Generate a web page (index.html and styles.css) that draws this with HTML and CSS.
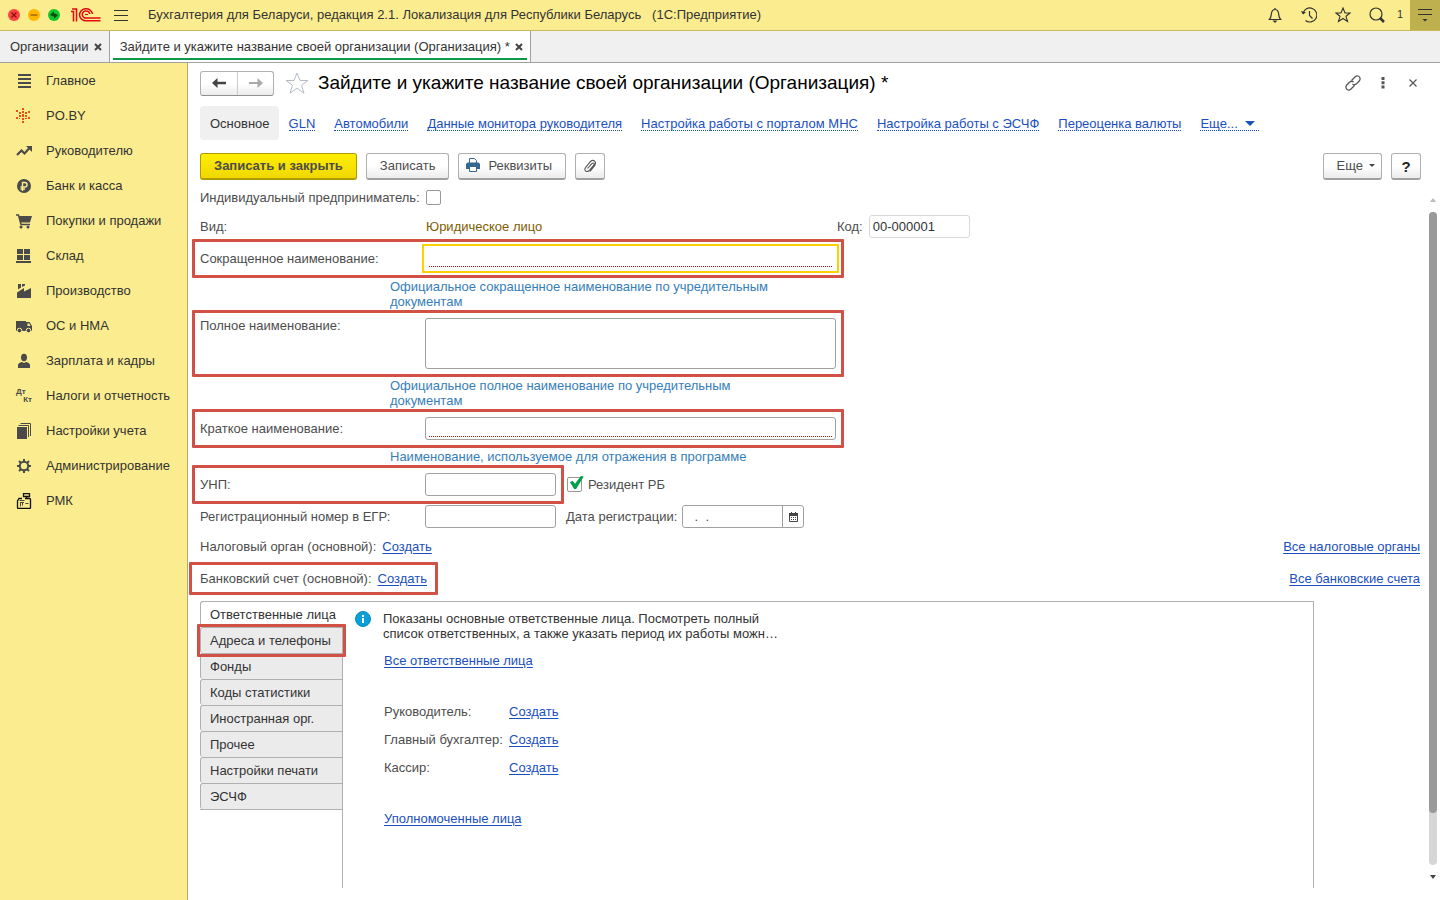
FILE: index.html
```
<!DOCTYPE html>
<html lang="ru">
<head>
    <meta charset="UTF-8">
    <meta name="viewport" content="width=device-width, initial-scale=1.0">
    <title>Бухгалтерия для Беларуси</title>
    <link rel="stylesheet" href="styles.css">
</head>
<body>
    <header class="topbar">
        <button class="win close" aria-label="Закрыть"><svg width="12" height="12" viewBox="0 0 12 12"><path d="M3.5 3.5l5 5M8.5 3.5l-5 5" stroke="#8c1010" stroke-width="1.3"/></svg></button>
        <button class="win minimize" aria-label="Свернуть"><svg width="12" height="12" viewBox="0 0 12 12"><path d="M2.5 6h7" stroke="#a06a00" stroke-width="1.5"/></svg></button>
        <button class="win maximize" aria-label="Развернуть"><svg width="12" height="12" viewBox="0 0 12 12"><path d="M6 2v5.500H5L2 6zM6 10V4.500h1L10 6z" fill="#06500c"/></svg></button>
        <svg class="logo" width="30" height="16" viewBox="0 0 30 16" fill="none" stroke="#e30613" stroke-width="1.5">
            <path d="M0 4.500H2.500V14.500M1 2H5.500V14.500"/>
            <path d="M21.500 7A6.500 6 0 1 0 15.500 13.800H29.500"/>
            <path d="M18.800 7A3.800 3.500 0 1 0 15.500 11H29.500"/>
            <path d="M14 7.500h3" stroke-width="1.200"/>
        </svg>
        <button class="icon-btn menu" aria-label="Меню"><svg width="14" height="11" viewBox="0 0 14 11"><path d="M0 .5h14M0 5.500h14M0 10.500h14" stroke="#333"/></svg></button>
        <span class="app-title">Бухгалтерия для Беларуси, редакция 2.1. Локализация для Республики Беларусь &nbsp; (1С:Предприятие)</span>
        <div class="top-tools">
            <button class="icon-btn" aria-label="Уведомления"><svg width="16" height="16" viewBox="0 0 16 16" fill="none" stroke="#333" stroke-width="1.2"><path d="M1.500 12.500h13M2.500 12c2-2 1.500-3.500 2-6C5 3.500 6.500 2.500 8 2.500s3 1 3.500 3.500c.5 2.500 0 4 2 6M8 1v1.500"/><path d="M5.500 13.500h5L8 16z" fill="#333" stroke="none"/></svg></button>
            <button class="icon-btn" aria-label="История"><svg width="16" height="16" viewBox="0 0 16 16" fill="none" stroke="#333" stroke-width="1.200"><path d="M2 6.500A7 7 0 1 1 4.500 13.500M8.500 4v4.500l3 3"/><path d="M0 4l2 3.500L5 5.200z" fill="#333" stroke="none"/></svg></button>
            <button class="icon-btn" aria-label="Избранное"><svg width="16" height="16" viewBox="0 0 16 16" fill="none" stroke="#333" stroke-width="1.100"><path d="M8 1l2 5h5l-4 3.300 1.500 5.200L8 11.500l-4.500 3L5 9.300 1 6h5z"/></svg></button>
            <button class="icon-btn" aria-label="Поиск"><svg width="16" height="16" viewBox="0 0 16 16" fill="none" stroke="#333"><circle cx="7" cy="7" r="6" stroke-width="1.200"/><path d="M11 11l4 4" stroke-width="2.500"/></svg></button>
            <span class="counter">1</span>
            <button class="icon-btn panel-toggle" aria-label="Настройка панели"><svg width="14" height="14" viewBox="0 0 14 14"><path d="M0 1.500h14M0 6.500h14" stroke="#333"/><path d="M4.500 11h5L7 13.500z" fill="#333"/></svg></button>
        </div>
    </header>

    <nav class="window-tabs">
        <div class="window-tab"><a href="#">Организации</a><button aria-label="Закрыть вкладку"><svg width="8" height="8" viewBox="0 0 8 8"><path d="M1 1l6 6M7 1L1 7" stroke="#444" stroke-width="2"/></svg></button></div>
        <div class="window-tab active"><a href="#">Зайдите и укажите название своей организации (Организация) *</a><button aria-label="Закрыть вкладку"><svg width="8" height="8" viewBox="0 0 8 8"><path d="M1 1l6 6M7 1L1 7" stroke="#444" stroke-width="2"/></svg></button></div>
    </nav>

    <div class="workspace">
        <aside class="sidebar">
            <a href="#"><svg width="16" height="16" viewBox="0 0 16 16"><path d="M2 2h13M2 6h13M2 10h13M2 14h13" stroke="#4a4a4a" stroke-width="2"/></svg>Главное</a>
            <a href="#"><svg width="16" height="16" viewBox="0 0 16 16" fill="#e8520c"><path d="M6 0h2v2H6zM6 3h2v2H6zM6 6h2v3H6zM6 10h2v2H6zM6 13h2v2H6zM0 2h2v2H0zM12 3h2v2h-2zM3 4h2v2H3zM9 4h2v2H9zM0 9h2v2H0zM3 7h2v2H3zM9 7h2v2H9zM12 9h2v2h-2zM3 10h1v1H3zM9 10h2v1H9z"/></svg>PO.BY</a>
            <a href="#"><svg width="16" height="16" viewBox="0 0 16 16"><path d="M1 12l4.500-4.500 3 3L13 5.500" fill="none" stroke="#4a4a4a" stroke-width="2.200"/><path d="M10 3h6v6z" fill="#4a4a4a"/></svg>Руководителю</a>
            <a href="#"><svg width="16" height="16" viewBox="0 0 16 16"><circle cx="8" cy="8" r="7" fill="#4a4a4a"/><path d="M6.500 13V4.500h2.300a2.200 2.200 0 0 1 0 4.500H4.500M4.500 11H9" fill="none" stroke="#fbed8f" stroke-width="1.400"/></svg>Банк и касса</a>
            <a href="#"><svg width="16" height="16" viewBox="0 0 16 16"><path d="M3 3h13l-2 6.500H4.500z" fill="#4a4a4a"/><path d="M0 2h2.500L5 11.500h9" fill="none" stroke="#4a4a4a" stroke-width="1.500"/><circle cx="5" cy="14" r="1.500" fill="#4a4a4a"/><circle cx="12" cy="14" r="1.500" fill="#4a4a4a"/></svg>Покупки и продажи</a>
            <a href="#"><svg width="16" height="16" viewBox="0 0 16 16" fill="#4a4a4a"><path d="M1 1h6v5H1zM8 1h6v5H8zM1 7h6v5H1zM8 7h6v5H8zM0 13h15v2H0z"/></svg>Склад</a>
            <a href="#"><svg width="16" height="16" viewBox="0 0 16 16" fill="#4a4a4a"><path d="M1 15V9.500l7-4.500v3.500L15 5v10zM2 1h3v3.500L2 6.500zM6 1h3v1.500L6 4z"/></svg>Производство</a>
            <a href="#"><svg width="16" height="16" viewBox="0 0 16 16"><path d="M0 3h10v10H0zM10 4h3.500L16 8v5h-6z" fill="#4a4a4a"/><path d="M11.500 5.500h1.800L14.500 8h-3z" fill="#fbed8f"/><circle cx="3.500" cy="12.500" r="2.300" fill="#4a4a4a" stroke="#fbed8f"/><circle cx="12.500" cy="12.500" r="2.300" fill="#4a4a4a" stroke="#fbed8f"/></svg>ОС и НМА</a>
            <a href="#"><svg width="16" height="16" viewBox="0 0 16 16" fill="#4a4a4a"><ellipse cx="8" cy="4.500" rx="3" ry="3.700"/><path d="M2 15v-3q0-2 4-3l2 1 2-1q4 1 4 3v3z"/></svg>Зарплата и кадры</a>
            <a href="#"><span class="dtkt"><b>Дт</b><b>Кт</b></span>Налоги и отчетность</a>
            <a href="#"><svg width="16" height="16" viewBox="0 0 16 16"><path d="M1 4h10v12H1z" fill="#4a4a4a"/><path d="M2.500 2.500h10V14M4.500 .5h10V13" fill="none" stroke="#4a4a4a"/></svg>Настройки учета</a>
            <a href="#"><svg width="16" height="16" viewBox="0 0 16 16" fill="none" stroke="#4a4a4a"><circle cx="8" cy="8" r="4.200" stroke-width="2"/><path d="M8 1v2.500M8 12.500V15M1 8h2.500M12.500 8H15M3 3l2 2M11 11l2 2M3 13l2-2M11 5l2-2" stroke-width="2"/></svg>Администрирование</a>
            <a href="#"><svg width="16" height="16" viewBox="0 0 16 16" fill="none" stroke="#111"><path d="M7.500 .5h6v3h-6zM10.500 3.500v2M6 5.500H3L1.500 8v6.500q0 1 1 1h11q1 0 1-1v-8q0-1-1-1H9" stroke-width="1.300"/><path d="M3.500 7.500h5M4 9.500h4M4.500 9.500v4M6.500 9.500v3M9.500 10.500h3" stroke="#4a4a3a"/></svg>РМК</a>
        </aside>

        <main class="page">
            <div class="page-head">
                <div class="history">
                    <button aria-label="Назад"><svg width="14" height="10" viewBox="0 0 14 10"><path d="M0 5l5.500-5v3.700H14v2.600H5.500V10z" fill="#444"/></svg></button>
                    <button aria-label="Вперед"><svg width="14" height="10" viewBox="0 0 14 10"><path d="M14 5L8.500 0v4H0v2h8.500v4z" fill="#aaa"/></svg></button>
                </div>
                <button class="icon-btn favorite" aria-label="В избранное"><svg width="24" height="22" viewBox="0 0 24 22"><path d="M12 1l3 7.500h8l-6.500 4.800L19 21.200l-7-5-7 5 2.500-7.900L1 8.500h8z" fill="#fff" stroke="#b4bcc6"/></svg></button>
                <h1>Зайдите и укажите название своей организации (Организация) *</h1>
                <div class="head-tools">
                    <button class="icon-btn" aria-label="Ссылка"><svg width="16" height="16" viewBox="0 0 16 16" fill="none" stroke="#555" stroke-width="1.300"><path d="M6.500 5.500L10 2q1.500-1.500 3-1 2.500 1 2 3.500 0 .8-1 1.800L11.500 8.800q-2 1.800-4 .2M9.500 10.500L6 14q-1.500 1.500-3 1Q.5 14 1 11.500q0-.8 1-1.800L4.500 7.200q2-1.800 4-.2"/></svg></button>
                    <button class="icon-btn" aria-label="Действия"><svg width="4" height="12" viewBox="0 0 4 12" fill="#555"><path d="M.5 0h3v3h-3zM.5 4.300h3v3h-3zM.5 8.600h3v3h-3z"/></svg></button>
                    <button class="icon-btn" aria-label="Закрыть"><svg width="8" height="8" viewBox="0 0 8 8"><path d="M.5 .5l7 7M7.500 .5l-7 7" stroke="#555" stroke-width="1.200"/></svg></button>
                </div>
            </div>

            <nav class="sections">
                <span class="current">Основное</span>
                <a href="#">GLN</a>
                <a href="#">Автомобили</a>
                <a href="#">Данные монитора руководителя</a>
                <a href="#">Настройка работы с порталом МНС</a>
                <a href="#">Настройка работы с ЭСЧФ</a>
                <a href="#">Переоценка валюты</a>
                <a href="#">Еще... &nbsp;<svg width="10" height="5" viewBox="0 0 10 5"><path d="M0 0h10L5 5z" fill="#1a4fc0"/></svg>&nbsp;</a>
            </nav>

            <div class="toolbar">
                <button class="btn primary">Записать и закрыть</button>
                <button class="btn">Записать</button>
                <button class="btn with-icon"><svg width="14" height="14" viewBox="0 0 14 14"><path d="M3.500 5V.5h5l2 2V5" fill="#fff" stroke="#34678f"/><path d="M1.500 4.500h11L14 6v5H0V6z" fill="#34678f"/><path d="M3.500 8.500h7v5h-7z" fill="#fff" stroke="#34678f"/></svg>Реквизиты</button>
                <button class="btn square" aria-label="Файлы"><svg width="14" height="14" viewBox="0 0 14 14" fill="none" stroke="#555" stroke-width="1.100"><path d="M4.500 9.500l4.500-5q1.300-1 2 0 .5.800-.2 1.700L6 11.800q-2 1.500-3.500 0-1.300-1.700.2-3.500L7.500 2.500q2.300-2 4.300-.2 1.500 2-.2 4.400L7 12.500"/></svg></button>
                <button class="btn more">Еще<svg width="6" height="3" viewBox="0 0 6 3"><path d="M0 0h6L3 3z" fill="#444"/></svg></button>
                <button class="btn square help">?</button>
            </div>

            <div class="form-area">
                <form class="form">
                    <div class="row row-check">
                        <label for="ip">Индивидуальный предприниматель:</label>
                        <input type="checkbox" id="ip">
                    </div>
                    <div class="row row-kind">
                        <span class="caption">Вид:</span>
                        <span class="kind">Юридическое лицо</span>
                        <label for="code">Код:</label>
                        <input class="code" type="text" id="code" value="00-000001" readonly>
                    </div>
                    <div class="row row-short">
                        <div class="field marked">
                            <label class="caption" for="short-name">Сокращенное наименование:</label>
                            <input class="wide required focused" type="text" id="short-name">
                        </div>
                    </div>
                    <p class="hint">Официальное сокращенное наименование по учредительным документам</p>
                    <div class="row row-full">
                        <div class="field top marked">
                            <label class="caption" for="full-name">Полное наименование:</label>
                            <textarea class="wide" id="full-name"></textarea>
                        </div>
                    </div>
                    <p class="hint">Официальное полное наименование по учредительным документам</p>
                    <div class="row row-name">
                        <div class="field marked">
                            <label class="caption" for="name">Краткое наименование:</label>
                            <input class="wide required" type="text" id="name">
                        </div>
                    </div>
                    <p class="hint">Наименование, используемое для отражения в программе</p>
                    <div class="row row-name">
                        <div class="field marked">
                            <label class="caption" for="unp">УНП:</label>
                            <input class="short" type="text" id="unp">
                        </div>
                        <input class="resident" type="checkbox" id="resident" checked>
                        <label for="resident">Резидент РБ</label>
                    </div>
                    <div class="row row-reg">
                        <label class="caption" for="reg">Регистрационный номер в ЕГР:</label>
                        <input class="short" type="text" id="reg">
                        <label class="date-label" for="reg-date">Дата регистрации:</label>
                        <div class="date">
                            <input type="text" id="reg-date" value="  .  .    ">
                            <button type="button" aria-label="Выбрать дату"><svg width="9" height="10" viewBox="0 0 9 10"><path d="M.5 1.500h8v8h-8z" fill="none" stroke="#444"/><path d="M0 1h9v3H0zM2 0h1v1H2zM6 0h1v1H6zM2 5h1v1H2zM4 5h1v1H4zM6 5h1v1H6zM2 7h1v1H2zM4 7h1v1H4zM6 7h1v1H6z" fill="#444"/></svg></button>
                        </div>
                    </div>
                    <div class="row row-link">
                        <div class="field">Налоговый орган (основной):<a href="#">Создать</a></div>
                        <a class="all" href="#">Все налоговые органы</a>
                    </div>
                    <div class="row row-link">
                        <div class="field marked loose">Банковский счет (основной):<a href="#">Создать</a></div>
                        <a class="all" href="#">Все банковские счета</a>
                    </div>

                    <div class="panel">
                        <div class="panel-tabs">
                            <button type="button" class="selected">Ответственные лица</button>
                            <button type="button" class="marked tight">Адреса и телефоны</button>
                            <button type="button">Фонды</button>
                            <button type="button">Коды статистики</button>
                            <button type="button">Иностранная орг.</button>
                            <button type="button">Прочее</button>
                            <button type="button">Настройки печати</button>
                            <button type="button">ЭСЧФ</button>
                            <div class="tabs-rest"></div>
                        </div>
                        <div class="panel-body">
                            <div class="info">
                                <svg width="16" height="16" viewBox="0 0 16 16"><circle cx="8" cy="8" r="7.500" fill="#0a9fd8" stroke="#0788bb"/><path d="M7 4h2v2H7zM7 7h2v5H7z" fill="#fff"/></svg>
                                <p>Показаны основные ответственные лица. Посмотреть полный<br>список ответственных, а также указать период их работы можн…</p>
                            </div>
                            <a href="#">Все ответственные лица</a>
                            <dl class="people">
                                <dt>Руководитель:</dt><dd><a href="#">Создать</a></dd>
                                <dt>Главный бухгалтер:</dt><dd><a href="#">Создать</a></dd>
                                <dt>Кассир:</dt><dd><a href="#">Создать</a></dd>
                            </dl>
                            <a href="#">Уполномоченные лица</a>
                        </div>
                    </div>
                </form>
                <div class="scrollbar">
                    <svg width="6" height="4" viewBox="0 0 6 4"><path d="M0 4h6L3 0z" fill="#bbb"/></svg>
                    <div class="track"><div class="thumb"></div></div>
                    <svg width="6" height="4" viewBox="0 0 6 4"><path d="M0 0h6L3 4z" fill="#444"/></svg>
                </div>
            </div>
        </main>
    </div>
</body>
</html>
```
FILE: styles.css
```
* {
    box-sizing: border-box;
}
body {
    margin: 0;
    height: 100vh;
    display: flex;
    flex-direction: column;
    overflow: hidden;
    font-family: "Liberation Sans", Arial, sans-serif;
    font-size: 13px;
    line-height: 15px;
    color: #4d4d4d;
    background: #fff;
}
button, input, textarea {
    font: inherit;
    color: inherit;
}
button {
    padding: 0;
    border: none;
    background: none;
    cursor: pointer;
}
svg {
    display: block;
    flex: none;
}
a {
    color: #1a4fc0;
    text-underline-offset: 2px;
}

/* Верхняя панель */
.topbar {
    display: flex;
    align-items: center;
    height: 31px;
    padding-left: 8px;
    background: #fbed8f;
    border-bottom: 1px solid #c9b95c;
    color: #333;
}
.win {
    width: 12px;
    height: 12px;
    margin-right: 8px;
    border-radius: 50%;
}
.close {
    background: #fb4540;
}
.minimize {
    background: #ffb400;
}
.maximize {
    background: #0fc82c;
}
.logo {
    margin-left: 3px;
}
.icon-btn {
    display: flex;
    align-items: center;
    justify-content: center;
}
.menu {
    margin: 0 20px 0 13px;
}
.app-title, .counter {
    padding-bottom: 2px;
}
.top-tools {
    display: flex;
    align-items: center;
    align-self: stretch;
    gap: 18px;
    margin-left: auto;
}
.counter {
    margin: 0 1px 0 -6px;
    font-size: 11px;
}
.panel-toggle {
    align-self: stretch;
    width: 30px;
    margin-left: -12px;
    background: #bfb04f;
}

/* Вкладки окон */
.window-tabs {
    display: flex;
    height: 32px;
    background: #f0f0f0;
    border-bottom: 1px solid #a0a0a0;
}
.window-tab {
    display: flex;
    align-items: center;
    gap: 5px;
    padding: 0 7px 0 10px;
    border-right: 1px solid #a0a0a0;
}
.window-tab a {
    color: #333;
    text-decoration: none;
}
.active {
    position: relative;
    background: #fff;
}
.active::after {
    content: "";
    position: absolute;
    left: 3px;
    right: 3px;
    bottom: 2px;
    height: 2px;
    background: #0a9a4a;
}

.workspace {
    flex: 1;
    display: flex;
    min-height: 0;
}

/* Боковое меню */
.sidebar {
    flex: none;
    width: 188px;
    background: #fbed8f;
    border-right: 1px solid #b5ab6c;
}
.sidebar a {
    display: flex;
    align-items: center;
    gap: 14px;
    height: 35px;
    padding-left: 16px;
    color: #333;
    text-decoration: none;
}
.dtkt {
    display: flex;
    flex-direction: column;
    width: 16px;
    font-size: 8px;
    line-height: 8px;
    color: #4a4a4a;
}
.dtkt b:last-child {
    align-self: flex-end;
}

/* Страница */
.page {
    flex: 1;
    display: flex;
    flex-direction: column;
    min-width: 0;
    padding: 7px 0 12px 12px;
}
.page-head {
    display: flex;
    align-items: center;
    height: 26px;
    padding-right: 20px;
}
.history {
    display: flex;
    border: 1px solid #b0b0b0;
    border-bottom-color: #909090;
    border-radius: 3px;
    background: linear-gradient(#fff 50%, #ececec);
}
.history button {
    display: flex;
    align-items: center;
    justify-content: center;
    width: 36px;
    height: 23px;
}
.history button + button {
    border-left: 1px solid #ccc;
}
.favorite {
    margin: 0 9px 0 11px;
}
h1 {
    margin: 0;
    font-size: 19px;
    font-weight: normal;
    line-height: 24px;
    color: #000;
    white-space: nowrap;
}
.head-tools {
    display: flex;
    margin-left: auto;
}
.head-tools button {
    width: 30px;
}
.head-tools button:last-child {
    margin-right: -8px;
}
.sections {
    display: flex;
    align-items: center;
    gap: 19px;
    margin-top: 10px;
    white-space: nowrap;
}
.current {
    margin-right: -9px;
    padding: 10px 9px 9px 10px;
    border-radius: 4px;
    background: #f0f0f0;
    color: #333;
}
.sections a {
    padding-top: 2px;
    line-height: 12px;
    text-decoration: none;
    border-bottom: 1px dotted #1a4fc0;
}
.sections svg {
    display: inline-block;
    vertical-align: 2px;
}
.toolbar {
    display: flex;
    gap: 9px;
    margin-top: 13px;
    padding-right: 19px;
}
.btn {
    display: flex;
    align-items: center;
    justify-content: center;
    height: 27px;
    padding: 0 13px 2px;
    border: 1px solid #b0b0b0;
    border-bottom: 2px solid #a0a0a0;
    border-radius: 3px;
    background: linear-gradient(#fff 50%, #ececec);
}
.primary {
    font-weight: bold;
    border-color: #b09c00;
    background: linear-gradient(#ffee00, #f0d800);
}
.with-icon {
    gap: 8px;
    padding-left: 7px;
}
.square {
    width: 30px;
    padding: 0;
}
.more {
    gap: 6px;
    margin-left: auto;
    padding-right: 6px;
}
.help {
    font-size: 15px;
    font-weight: bold;
    color: #222;
}

/* Форма */
.form-area {
    flex: 1;
    display: flex;
    min-height: 0;
    margin-top: 4px;
}
.form {
    flex: 1;
    display: flex;
    flex-direction: column;
    min-width: 0;
    padding-left: 12px;
    margin-left: -12px;
    overflow: hidden;
}
.row, .field {
    display: flex;
    align-items: center;
}
.row {
    flex: none;
}
.row-check {
    height: 26px;
    gap: 6px;
}
.row-kind {
    height: 32px;
}
.row-short {
    height: 33px;
    margin-bottom: 4px;
}
.row-full {
    height: 69px;
}
.row-name {
    height: 41px;
}
.row-reg {
    height: 23px;
}
.row-link {
    height: 32px;
    padding-right: 1px;
}
.row-reg + .row-link {
    margin-top: 2px;
}
.caption {
    width: 225px;
}
.kind {
    width: 412px;
    padding-left: 1px;
    color: #805c00;
}
.top {
    align-items: flex-start;
}
.form input[type="text"], textarea {
    height: 23px;
    padding: 0 3px;
    border: 1px solid #a0a0a0;
    border-radius: 3px;
    background: #fff;
    outline: none;
}
.form .wide {
    width: 411px;
}
.form textarea {
    display: block;
    height: 51px;
    resize: none;
}
.form .short {
    width: 131px;
}
.form input.code {
    width: 101px;
    margin-left: 6px;
    border-color: #d8d8d8;
    color: #333;
}
.form input.required {
    background: repeating-linear-gradient(90deg, #f00 0 1px, #fff 1px 2px) 3px 18px / 403px 1px no-repeat;
}
.form input.focused {
    border-color: #fff;
    outline: 2px solid #ffcf00;
    outline-offset: 1px;
    border-radius: 0;
}
input[type="checkbox"] {
    appearance: none;
    position: relative;
    width: 15px;
    height: 15px;
    margin: 0;
    border: 1px solid #999;
    border-radius: 2px;
    background: #fff;
}
input[type="checkbox"]:checked::after {
    content: "";
    position: absolute;
    left: 2px;
    top: -2px;
    width: 14px;
    height: 14px;
    background: #00a04a;
    clip-path: polygon(0 45%, 18% 34%, 36% 56%, 78% 0, 98% 4%, 44% 92%, 30% 92%);
}
input.resident {
    margin: 0 6px 0 11px;
}
.date-label {
    margin: 0 5px 0 10px;
}
.date {
    display: flex;
    width: 122px;
    height: 23px;
    border: 1px solid #a0a0a0;
    border-radius: 3px;
}
.date input[type="text"] {
    flex: 1;
    min-width: 0;
    height: auto;
    padding-left: 4px;
    border: none;
}
.date button {
    display: flex;
    align-items: center;
    justify-content: center;
    width: 21px;
    border-left: 1px solid #a0a0a0;
}
.hint {
    flex: none;
    width: 400px;
    margin: 0 0 0 190px;
    color: #367eba;
}
.field > a {
    margin-left: 6px;
}
.all {
    margin-left: auto;
}

/* Красная рамка вокруг важных полей */
.marked {
    position: relative;
}
.marked::after {
    content: "";
    position: absolute;
    inset: -8px;
    border: 3px solid #d25146;
    border-radius: 1px;
    pointer-events: none;
}
.loose::after {
    inset: -9px -11px;
}
.panel-tabs .tight::after {
    inset: -4px;
    z-index: 1;
}

/* Панель с закладками */
.panel {
    flex: 1 0 auto;
    display: flex;
    margin: 7px 107px 0 0;
}
.panel-tabs {
    display: flex;
    flex-direction: column;
    width: 143px;
}
.panel-tabs button {
    height: 26px;
    padding: 0 0 1px 9px;
    border: 1px solid #b0b0b0;
    border-bottom: none;
    border-radius: 3px 0 0 3px;
    background: #ebebeb;
    color: #333;
    text-align: left;
    white-space: nowrap;
}
.panel-tabs .selected {
    border-right: none;
    background: #fff;
}
.tabs-rest {
    flex: 1;
    border-top: 1px solid #b0b0b0;
    border-right: 1px solid #b0b0b0;
}
.panel-body {
    flex: 1;
    padding: 9px 0 0 41px;
    border-top: 1px solid #b0b0b0;
    border-right: 1px solid #b0b0b0;
}
.info {
    display: flex;
    gap: 12px;
    margin: 0 0 12px -29px;
    color: #333;
}
.info p {
    margin: 0;
}
.people {
    display: grid;
    grid-template-columns: 125px auto;
    row-gap: 13px;
    margin: 36px 0;
}
.people dt, .people dd {
    margin: 0;
}

/* Полоса прокрутки */
.scrollbar {
    display: flex;
    flex-direction: column;
    align-items: center;
    gap: 10px;
    width: 8px;
    margin: 14px 3px 9px 8px;
}
.track {
    flex: 1;
    width: 8px;
    border-radius: 4px;
    background: #d6d6d6;
}
.thumb {
    height: 92%;
    border-radius: 4px;
    background: #999;
}
```
